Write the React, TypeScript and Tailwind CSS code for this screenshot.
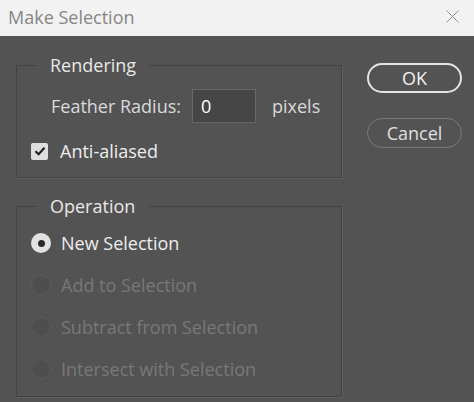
import { X } from 'lucide-react';

const Radio = ({ label, checked }: { label: string; checked?: boolean }) => (
  <div className="h-[42px] flex items-center">
    {checked ? (
      <span className="ml-[14px] w-[20px] h-[20px] rounded-full bg-[#e2e2e2] flex items-center justify-center">
        <span className="w-[7px] h-[7px] rounded-full bg-[#2a2a2a]" />
      </span>
    ) : (
      <span className="ml-[14px] w-[20px] h-[20px] rounded-full bg-[#4e4e4e] border border-[#5b5b5b]" />
    )}
    <span className={`ml-[10px] ${checked ? 'text-[#ededed]' : 'text-[#787878]'}`}>{label}</span>
  </div>
);

const App = () => {
  return (
    <div className="w-[474px] h-[402px] bg-[#535353] overflow-hidden text-[18px] font-['Open_Sans',sans-serif]">
      {/* Title bar */}
      <div className="h-[36px] bg-[#f2f2f2] flex items-center justify-between pl-[8px] pr-[10px]">
        <span className="text-[#868686] text-[18px] -mt-[2px]">Make Selection</span>
        <X size={23} strokeWidth={0.9} className="text-[#858585] -mt-[4px]" />
      </div>

      <div className="flex pt-[17px] pl-[16px]">
        {/* Left column */}
        <div className="w-[326px]">
          <fieldset className="border border-[#444444] shadow-[1px_1px_0_#5f5f5f] pb-[14px]">
            <legend className="ml-[20px] px-[13px] h-[24px] leading-[24px] text-[#e8e8e8]">Rendering</legend>
            <div className="mt-[12px] h-[34px] flex items-center pl-[34px]">
              <span className="text-[#dadada]">Feather Radius:</span>
              <div className="ml-[11px] w-[64px] h-[34px] bg-[#464646] border border-[#686868] flex items-center pl-[8px] text-white">
                0
              </div>
              <span className="ml-[16px] text-[#dadada]">pixels</span>
            </div>
            <div className="mt-[16px] h-[24px] flex items-center pl-[14px]">
              <span className="w-[17px] h-[17px] rounded-[2px] bg-[#dedede] flex items-center justify-center">
                <svg width="12" height="10" viewBox="0 0 12 10">
                  <path d="M1.5 5.2 L4.6 8.2 L10.5 1.8" fill="none" stroke="#222" strokeWidth="2.2" />
                </svg>
              </span>
              <span className="ml-[12px] text-[#ededed]">Anti-aliased</span>
            </div>
          </fieldset>

          <fieldset className="mt-[16px] border border-[#444444] shadow-[1px_1px_0_#5f5f5f] pb-[6px]">
            <legend className="ml-[20px] px-[13px] h-[24px] leading-[24px] text-[#e8e8e8]">Operation</legend>
            <div className="mt-[4px]">
              <Radio label="New Selection" checked />
              <Radio label="Add to Selection" />
              <Radio label="Subtract from Selection" />
              <Radio label="Intersect with Selection" />
            </div>
          </fieldset>
        </div>

        {/* Buttons */}
        <div className="ml-[25px] pt-[10px] flex flex-col">
          <button className="w-[95px] h-[30px] rounded-full border-2 border-[#e4e4e4] text-[#f2f2f2] leading-none">OK</button>
          <button className="mt-[25px] w-[95px] h-[30px] rounded-full border-[1.5px] border-[#7a7a7a] text-[#e0e0e0] leading-none">Cancel</button>
        </div>
      </div>
    </div>
  );
};

export default App;
